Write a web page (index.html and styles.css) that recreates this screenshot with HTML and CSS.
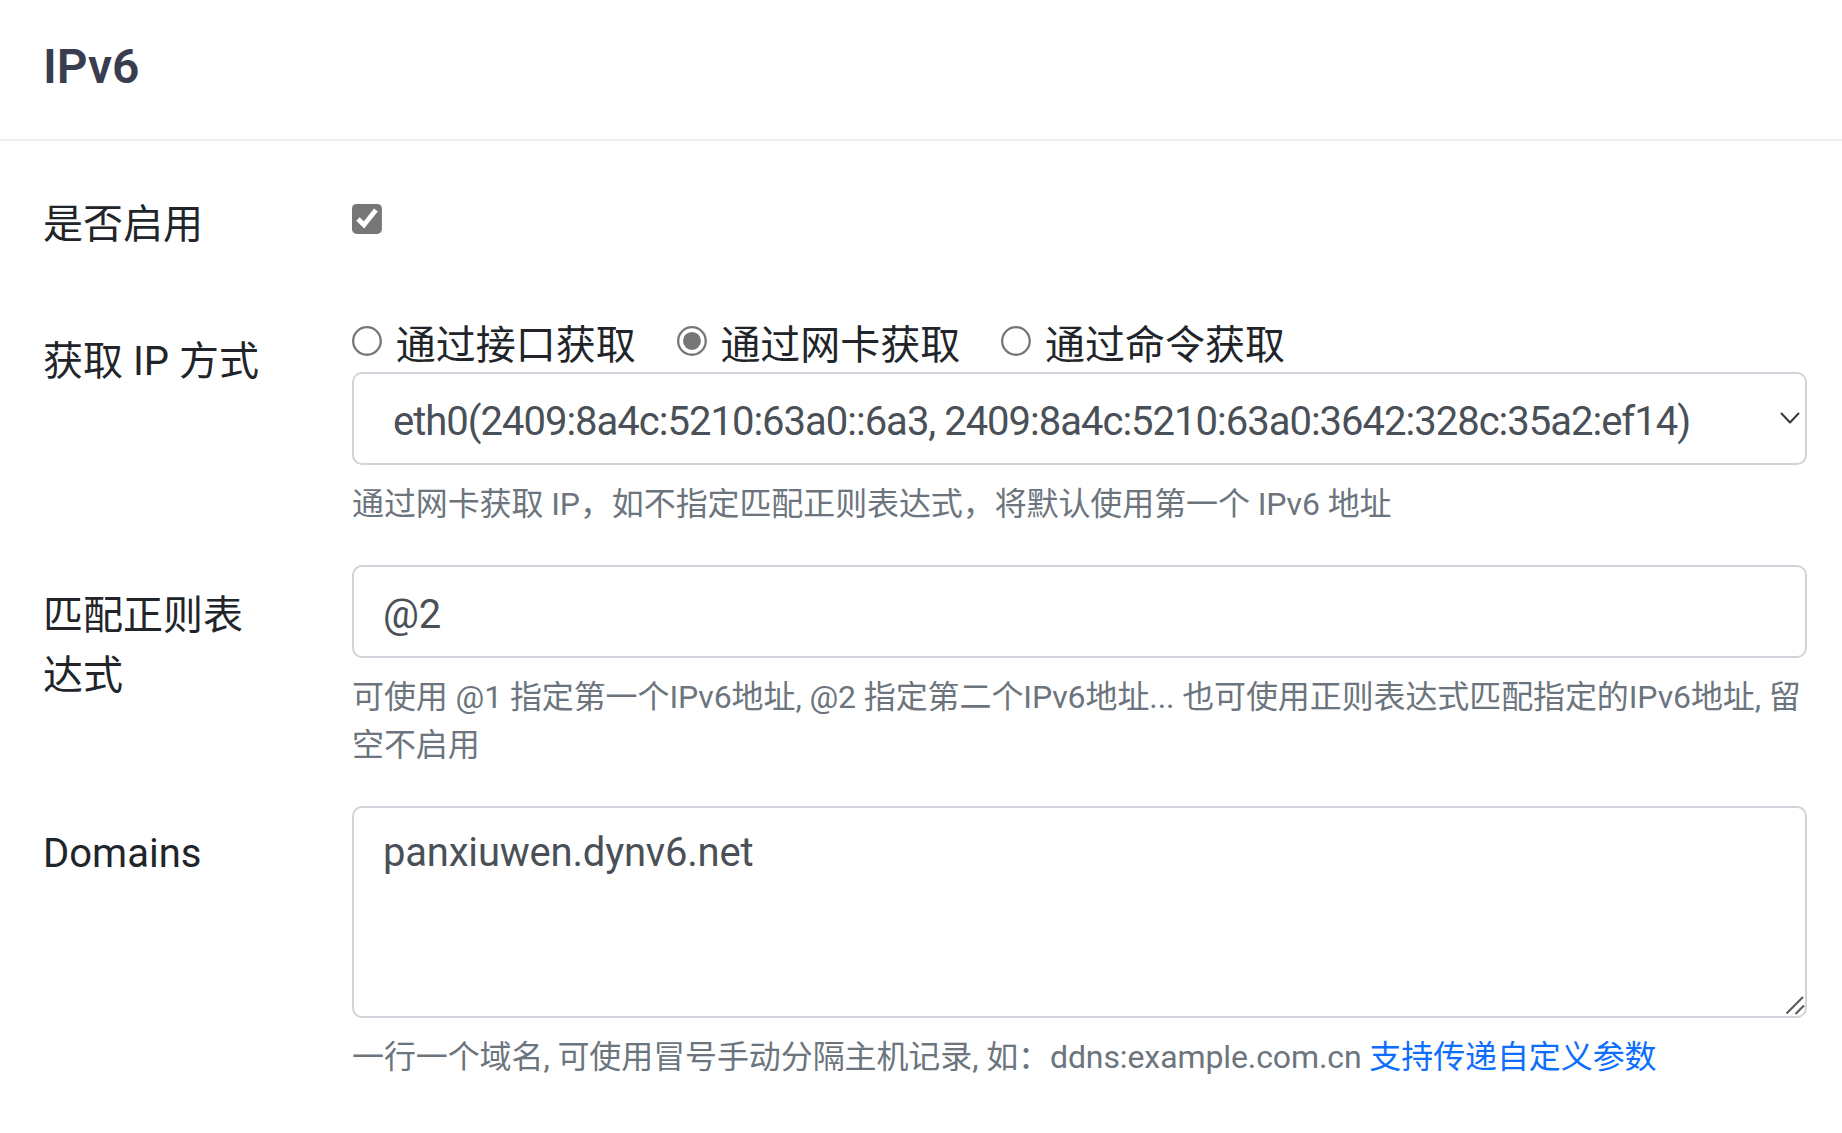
FILE: index.html
```html
<!DOCTYPE html>
<html lang="zh-CN">
<head>
<meta charset="utf-8">
<title>IPv6</title>
<link rel="stylesheet" href="styles.css">
</head>
<body>
<div class="card">
  <div class="card-header">
    <h5 class="card-title">IPv6</h5>
  </div>
  <div class="card-body">
    <div class="form-row row-enable">
      <label class="col-label col-label-plain" for="ipv6-enable">是否启用</label>
      <div class="col-control">
        <div class="check-wrap">
          <input type="checkbox" id="ipv6-enable" class="check-input" checked>
        </div>
      </div>
    </div>

    <div class="form-row">
      <label class="col-label col-label-radio">获取 IP 方式</label>
      <div class="col-control">
        <div class="radio-group">
          <label class="radio-item"><input type="radio" name="ipv6-type" class="radio-input"><span>通过接口获取</span></label>
          <label class="radio-item"><input type="radio" name="ipv6-type" class="radio-input" checked><span>通过网卡获取</span></label>
          <label class="radio-item"><input type="radio" name="ipv6-type" class="radio-input"><span>通过命令获取</span></label>
        </div>
        <div class="select-wrap">
          <select class="form-select">
            <option>eth0(2409:8a4c:5210:63a0::6a3, 2409:8a4c:5210:63a0:3642:328c:35a2:ef14)</option>
          </select>
          <svg class="select-chevron" viewBox="0 0 20 13" aria-hidden="true"><polyline points="1.5,1.5 10,10.5 18.5,1.5"/></svg>
        </div>
        <div class="form-text">通过网卡获取 IP，如不指定匹配正则表达式，将默认使用第一个 IPv6 地址</div>
      </div>
    </div>

    <div class="form-row">
      <label class="col-label" for="ipv6-reg">匹配正则表达式</label>
      <div class="col-control">
        <input type="text" id="ipv6-reg" class="form-control" value="@2">
        <div class="form-text">可使用 @1 指定第一个IPv6地址, @2 指定第二个IPv6地址... 也可使用正则表达式匹配指定的IPv6地址, 留空不启用</div>
      </div>
    </div>

    <div class="form-row">
      <label class="col-label col-label-latin" for="ipv6-domains">Domains</label>
      <div class="col-control">
        <div class="textarea-wrap">
          <textarea id="ipv6-domains" class="form-control form-textarea">panxiuwen.dynv6.net</textarea>
          <svg class="resize-grip" viewBox="0 0 19 19" aria-hidden="true"><line x1="0.5" y1="17.5" x2="17" y2="1"/><line x1="9.5" y1="18" x2="18" y2="9.5"/></svg>
        </div>
        <div class="form-text">一行一个域名, 可使用冒号手动分隔主机记录, 如：ddns:example.com.cn <a href="#" class="help-link">支持传递自定义参数</a></div>
      </div>
    </div>
  </div>
</div>
</body>
</html>
```

FILE: styles.css
```css
html, body {
  margin: 0;
  padding: 0;
  background: #ffffff;
}

body {
  font-family: Roboto, "Noto Sans CJK SC", sans-serif;
  color: #212529;
}

.card {
  background: #ffffff;
}

.card-header {
  box-sizing: content-box;
  height: 101px;
  padding: 38px 43px 0;
  border-bottom: 2px solid #eceef1;
}

.card-title {
  margin: 0;
  font-size: 48px;
  line-height: 57px;
  font-weight: 600;
  color: #3a3c50;
}

.card-body {
  padding: 54.35px 35px 40px 43px;
}

.form-row {
  display: grid;
  grid-template-columns: 230px 1fr;
  column-gap: 79px;
  align-items: start;
  margin-bottom: 37px;
}

.row-enable {
  margin-bottom: 61px;
}

.col-label {
  font-size: 40px;
  line-height: 60px;
  padding-top: 21.35px;
}

.col-label-plain {
  padding-top: 0;
}

.col-label-radio {
  padding-top: 16px;
}

.col-label-latin {
  padding-top: 18.35px;
}

.col-control {
  min-width: 0;
}

.check-wrap {
  padding-top: 8.65px;
  line-height: 0;
}

.check-input,
.radio-input {
  zoom: 2.3;
  margin: 0;
  accent-color: #767676;
}

.check-input {
  display: block;
}

.radio-group {
  display: flex;
  height: 55.65px;
}

.radio-item {
  display: flex;
  align-items: flex-start;
  margin-right: 41px;
  font-size: 40px;
  line-height: 60px;
  color: #212529;
}

.radio-input {
  margin-top: 4.2px;
  margin-right: 6px;
  flex: none;
}

.select-wrap,
.textarea-wrap {
  position: relative;
}

.form-select {
  display: block;
  width: 100%;
  height: 93px;
  box-sizing: border-box;
  -webkit-appearance: none;
  appearance: none;
  border: 2px solid #ced4da;
  border-radius: 10px;
  background: #ffffff;
  padding: 6px 60px 0 39px;
  font-family: inherit;
  font-size: 40px;
  letter-spacing: -1px;
  line-height: normal;
  color: #495057;
  outline: none;
}

.select-chevron {
  position: absolute;
  top: 40px;
  right: 7px;
  width: 20px;
  height: 13px;
  fill: none;
  stroke: #343a40;
  stroke-width: 2;
  stroke-linecap: round;
  stroke-linejoin: round;
  pointer-events: none;
}

.form-control {
  display: block;
  width: 100%;
  height: 93px;
  box-sizing: border-box;
  border: 2px solid #ced4da;
  border-radius: 10px;
  background: #ffffff;
  padding: 6px 29px 0;
  font-family: inherit;
  font-size: 40px;
  letter-spacing: -0.2px;
  line-height: normal;
  color: #495057;
  outline: none;
  margin: 0;
}

.form-textarea {
  height: 212px;
  padding: 15px 29px;
  line-height: 60px;
  resize: none;
}

.resize-grip {
  position: absolute;
  right: 2px;
  bottom: 3px;
  width: 19px;
  height: 19px;
  stroke: #5a5a5a;
  stroke-width: 2.2;
  pointer-events: none;
}

.form-text {
  margin-top: 15px;
  font-size: 32px;
  line-height: 48px;
  letter-spacing: -0.1px;
  color: #6c757d;
}

.help-link {
  color: #0d6efd;
  text-decoration: none;
}
```
